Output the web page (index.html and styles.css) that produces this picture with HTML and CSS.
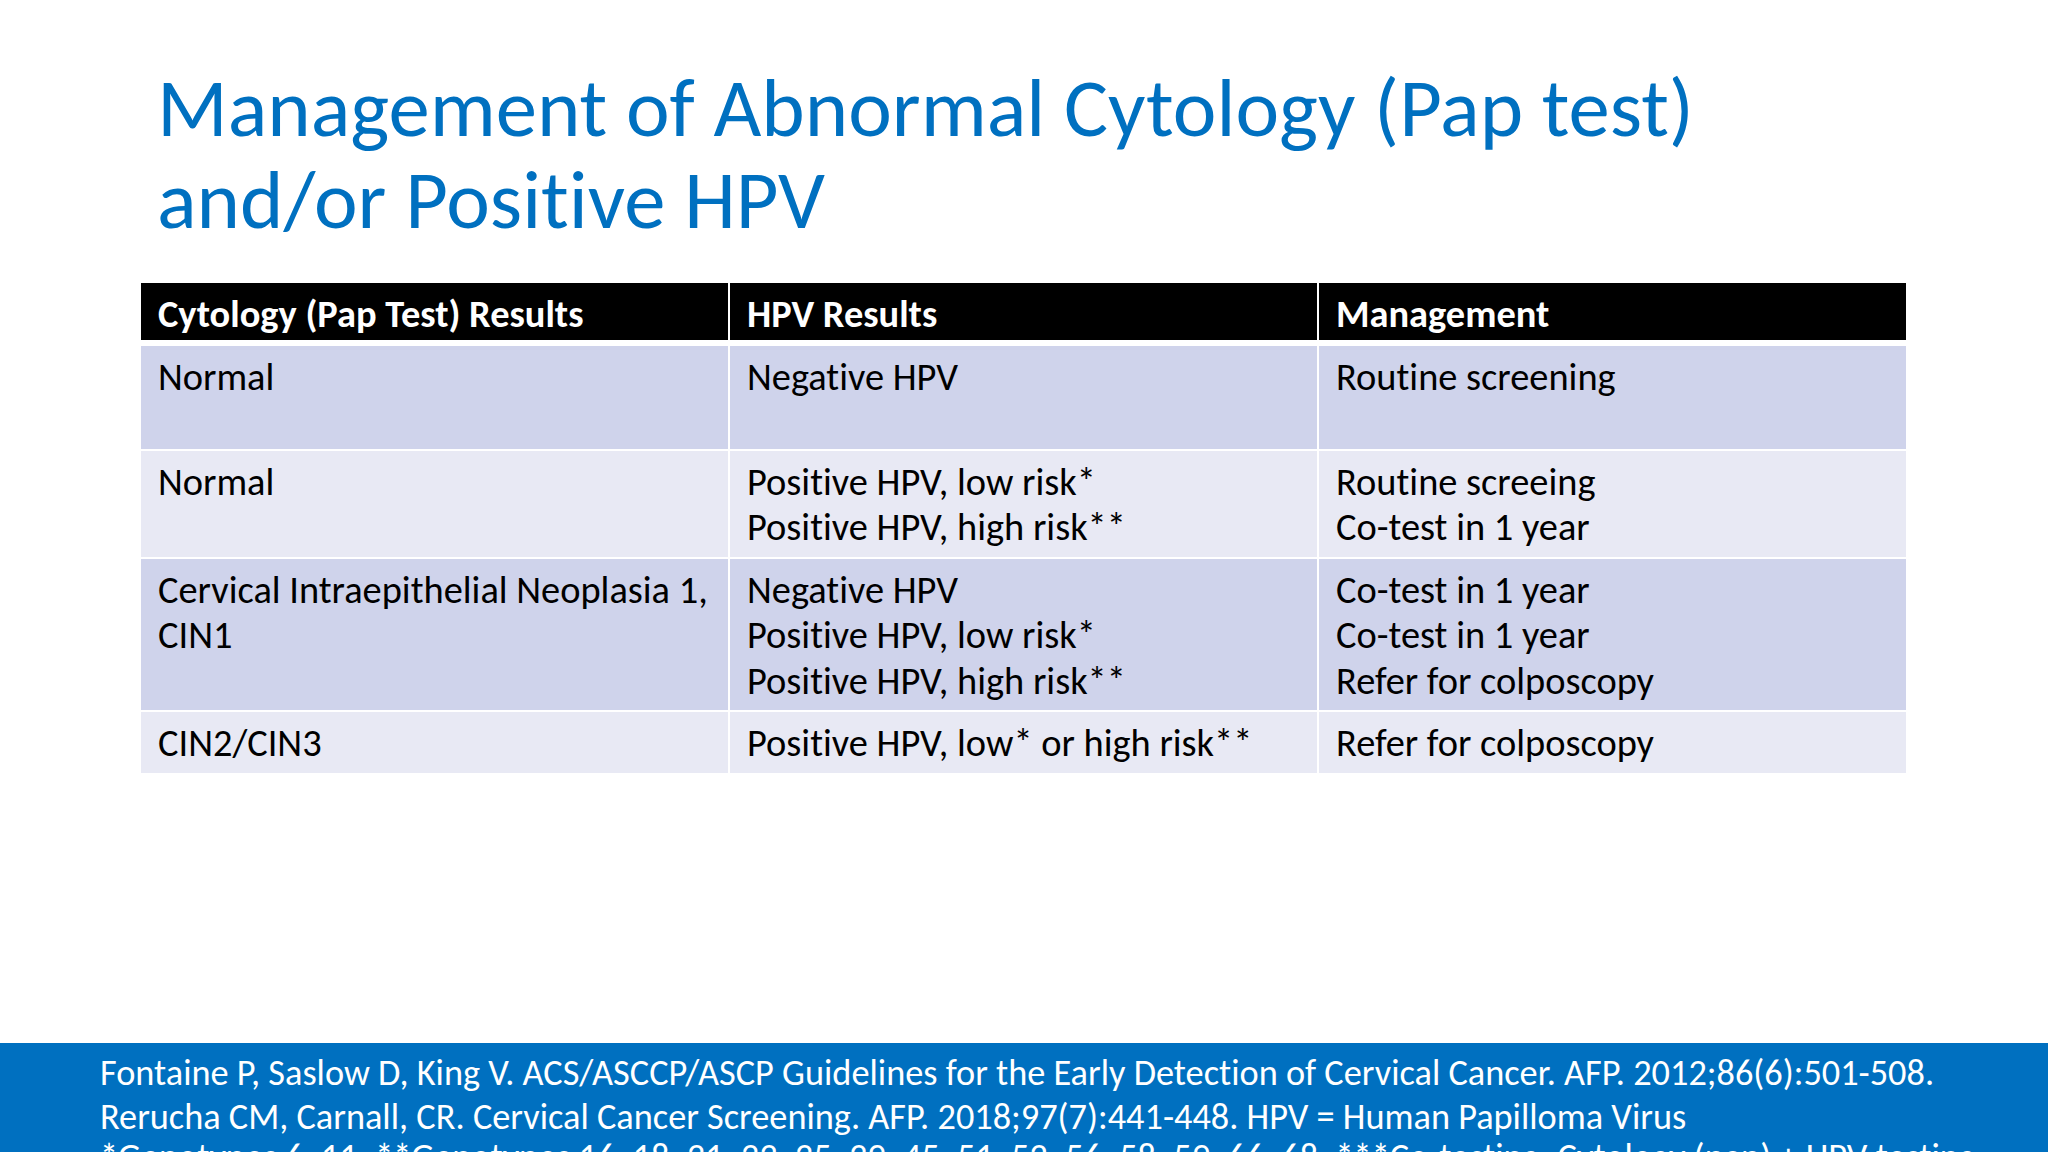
FILE: index.html
```html
<!DOCTYPE html>
<html lang="en">
<head>
<meta charset="utf-8">
<title>Management of Abnormal Cytology</title>
<link rel="stylesheet" href="styles.css">
</head>
<body>
<div class="slide">
  <h1 class="title">Management of Abnormal Cytology (Pap test)<br>and/or Positive HPV</h1>
  <table class="grid">
    <thead>
      <tr><th>Cytology (Pap Test) Results</th><th>HPV Results</th><th>Management</th></tr>
    </thead>
    <tbody>
      <tr class="odd tall"><td>Normal</td><td>Negative HPV</td><td>Routine screening</td></tr>
      <tr class="even"><td>Normal</td><td>Positive HPV, low risk*<br>Positive HPV, high risk**</td><td>Routine screeing<br>Co-test in 1 year</td></tr>
      <tr class="odd"><td>Cervical Intraepithelial Neoplasia 1,<br>CIN1</td><td>Negative HPV<br>Positive HPV, low risk*<br>Positive HPV, high risk**</td><td>Co-test in 1 year<br>Co-test in 1 year<br>Refer for colposcopy</td></tr>
      <tr class="even"><td>CIN2/CIN3</td><td>Positive HPV, low* or high risk**</td><td>Refer for colposcopy</td></tr>
    </tbody>
  </table>
  <div class="spacer"></div>
  <footer class="refs">
    <div class="ref-line">Fontaine P, Saslow D, King V. ACS/ASCCP/ASCP Guidelines for the Early Detection of Cervical Cancer. AFP. 2012;86(6):501-508.</div>
    <div class="ref-line ref-gap">Rerucha CM, Carnall, CR. Cervical Cancer Screening. AFP. 2018;97(7):441-448. HPV = Human Papilloma Virus</div>
    <div class="ref-line">*Genotypes 6, 11. **Genotypes 16, 18, 31, 33, 35, 39, 45, 51, 52, 56, 58, 59, 66, 68. ***Co-testing: Cytology (pap) + HPV testing</div>
  </footer>
</div>
</body>
</html>
```
FILE: styles.css
```css
html, body {
  margin: 0;
  padding: 0;
  background: #ffffff;
}
body {
  width: 2048px;
  height: 1152px;
  overflow: hidden;
  font-family: Carlito, Lato, "Open Sans", sans-serif;
  font-variant-ligatures: none;
}
.slide {
  width: 2048px;
  height: 1152px;
  display: flex;
  flex-direction: column;
  background: #ffffff;
}
.title {
  margin: 0;
  padding: 62px 0 0 157px;
  font-size: 82.7px;
  font-weight: 400;
  line-height: 92px;
  color: #0070c0;
  white-space: nowrap;
}
.grid {
  margin: 35px 0 0 139px;
  width: 1769px;
  border-collapse: separate;
  border-spacing: 2px;
  table-layout: fixed;
  font-size: 38.4px;
  line-height: 45.5px;
  color: #000000;
}
.grid th, .grid td {
  text-align: left;
  vertical-align: top;
  padding: 8px 17px 7px 17px;
  white-space: nowrap;
}
.grid th {
  background: #000000;
  color: #ffffff;
  font-weight: 700;
  padding-top: 8px;
  padding-bottom: 3px;
  border-bottom: 4px solid #ffffff;
}
.grid .odd td { background: #cfd3eb; }
.grid .even td { background: #e8e9f4; }
.grid .tall td { height: 88px; }
.spacer {
  flex: 1;
}
.refs {
  height: 109px;
  flex: none;
  background: #0070c0;
  color: #ffffff;
  font-size: 36.3px;
  line-height: 40px;
  padding: 10px 0 0 100px;
  box-sizing: border-box;
  white-space: nowrap;
  overflow: hidden;
}
.ref-gap {
  margin-top: 4px;
}
```
